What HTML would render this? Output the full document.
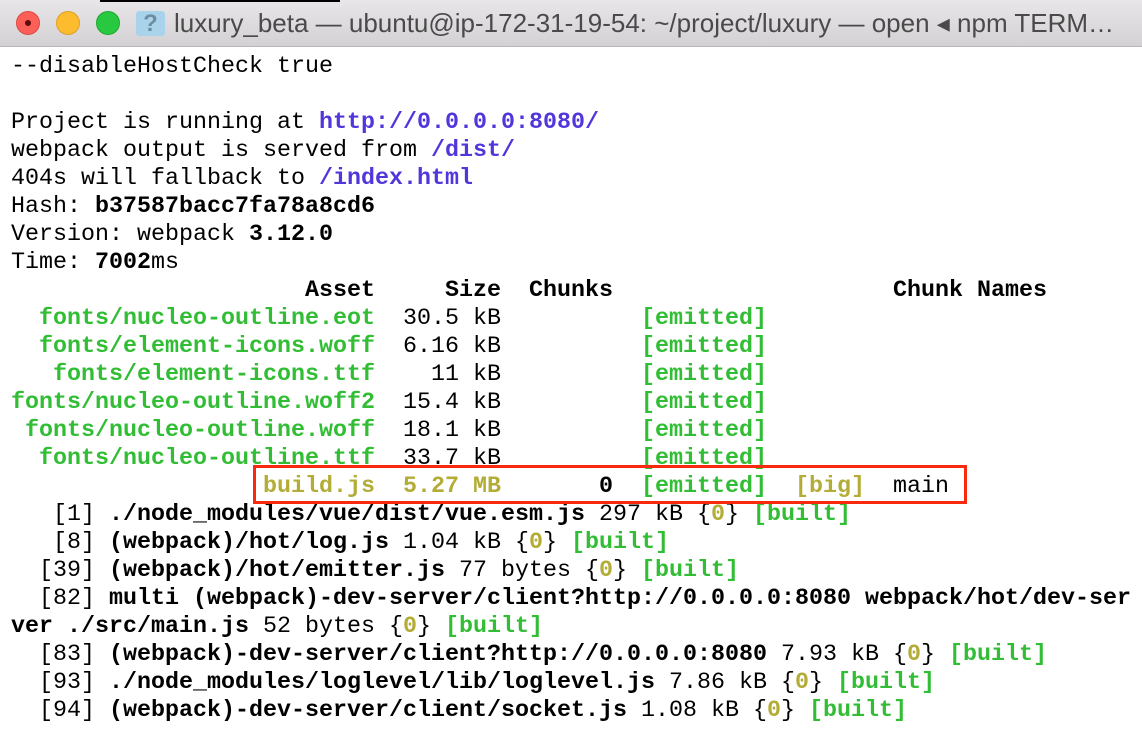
<!DOCTYPE html>
<html><head><meta charset="utf-8"><style>
html,body{margin:0;padding:0;width:1142px;height:732px;overflow:hidden;background:#fff}
.tb{position:absolute;left:0;top:0;width:1142px;height:46px;background:linear-gradient(#e8e6e8,#d3d1d3);border-bottom:1px solid #b8b8b8}
.strip{position:absolute;left:100px;top:0;width:240px;height:2px;background:#000}
.dot{position:absolute;top:11px;width:24px;height:24px;border-radius:50%;box-sizing:border-box}
.title{position:absolute;left:174px;top:8px;font:26px "Liberation Sans",sans-serif;color:#4a4a4a;white-space:nowrap}
.ic{position:absolute;left:136px;top:11px;width:29px;height:25px;background:#a9d3ea;border-radius:3px;color:#6d8ea0;font:bold 24px "Liberation Sans",sans-serif;text-align:center;line-height:25px}
pre{position:absolute;left:11px;top:53px;margin:0;font-family:"Liberation Mono",monospace;font-size:23.33px;line-height:28px;color:#000}
b{font-weight:bold}
.u{color:#5236dc;font-weight:bold}
.g{color:#31bd34;font-weight:bold}
.o{color:#b3ac37;font-weight:bold}
.box{position:absolute;left:253px;top:465px;width:708px;height:33px;border:3.5px solid #f9290d}
</style></head><body>
<div class="tb"><div class="strip"></div>
<div class="dot" style="left:16px;background:#fc5f57;border:1px solid #de4a42"><div style="position:absolute;left:8px;top:8px;width:6px;height:6px;border-radius:50%;background:#5c0d0a"></div></div>
<div class="dot" style="left:56px;background:#fdbc2e;border:1px solid #dea123"></div>
<div class="dot" style="left:96px;background:#28c840;border:1px solid #1eaa2f"></div>
<div class="ic">?</div>
<div class="title">luxury_beta — ubuntu@ip-172-31-19-54: ~/project/luxury — open ◂ npm TERM…</div>
</div>
<pre>--disableHostCheck true

Project is running at <span class="u">http://0.0.0.0:8080/</span>
webpack output is served from <span class="u">/dist/</span>
404s will fallback to <span class="u">/index.html</span>
Hash: <b>b37587bacc7fa78a8cd6</b>
Version: webpack <b>3.12.0</b>
Time: <b>7002</b>ms
<b>                     Asset     Size  Chunks                    Chunk Names</b>
  <span class="g">fonts/nucleo-outline.eot</span>  30.5 kB          <span class="g">[emitted]</span>
  <span class="g">fonts/element-icons.woff</span>  6.16 kB          <span class="g">[emitted]</span>
   <span class="g">fonts/element-icons.ttf</span>    11 kB          <span class="g">[emitted]</span>
<span class="g">fonts/nucleo-outline.woff2</span>  15.4 kB          <span class="g">[emitted]</span>
 <span class="g">fonts/nucleo-outline.woff</span>  18.1 kB          <span class="g">[emitted]</span>
  <span class="g">fonts/nucleo-outline.ttf</span>  33.7 kB          <span class="g">[emitted]</span>
                  <span class="o">build.js</span>  <span class="o">5.27 MB</span>       <b>0</b>  <span class="g">[emitted]</span>  <span class="o">[big]</span>  main
   [1] <b>./node_modules/vue/dist/vue.esm.js</b> 297 kB {<span class="o">0</span>} <span class="g">[built]</span>
   [8] <b>(webpack)/hot/log.js</b> 1.04 kB {<span class="o">0</span>} <span class="g">[built]</span>
  [39] <b>(webpack)/hot/emitter.js</b> 77 bytes {<span class="o">0</span>} <span class="g">[built]</span>
  [82] <b>multi (webpack)-dev-server/client?http://0.0.0.0:8080 webpack/hot/dev-ser
ver ./src/main.js</b> 52 bytes {<span class="o">0</span>} <span class="g">[built]</span>
  [83] <b>(webpack)-dev-server/client?http://0.0.0.0:8080</b> 7.93 kB {<span class="o">0</span>} <span class="g">[built]</span>
  [93] <b>./node_modules/loglevel/lib/loglevel.js</b> 7.86 kB {<span class="o">0</span>} <span class="g">[built]</span>
  [94] <b>(webpack)-dev-server/client/socket.js</b> 1.08 kB {<span class="o">0</span>} <span class="g">[built]</span></pre>
<div class="box"></div>
</body></html>
